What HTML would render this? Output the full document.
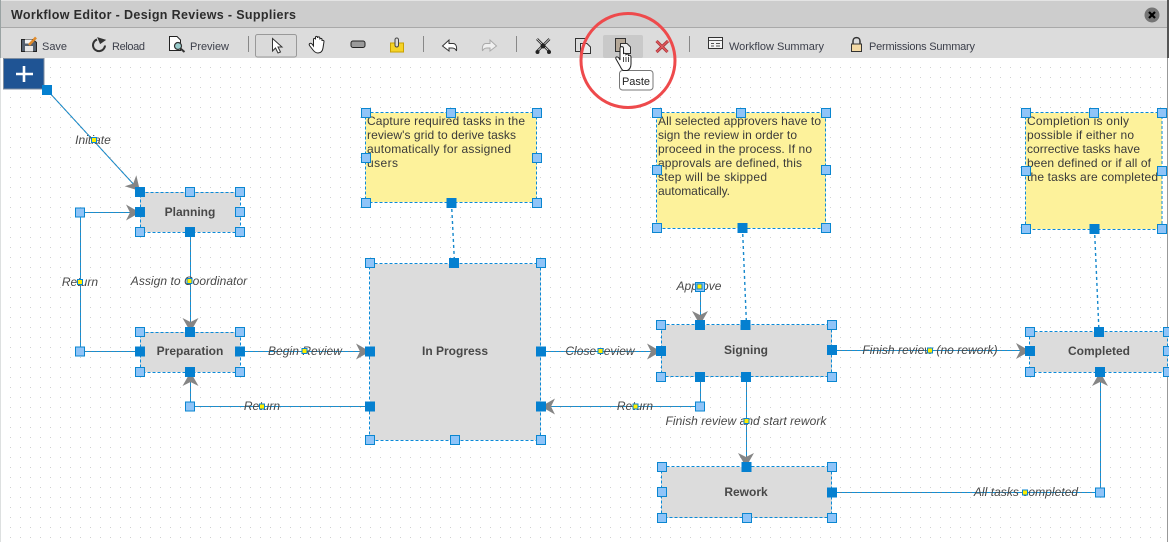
<!DOCTYPE html>
<html><head><meta charset="utf-8"><title>Workflow Editor</title>
<style>
html,body{margin:0;padding:0;width:1169px;height:542px;overflow:hidden;background:#fff}
svg{display:block;font-family:"Liberation Sans",Arial,sans-serif}
.n{font-size:12px;fill:#3a3a3a}
.b{font-size:12px;font-weight:bold;fill:#484848;text-anchor:middle}
.i{font-size:12px;font-style:italic;fill:#484848;text-anchor:middle;letter-spacing:.05px}
.t{font-size:11px;fill:#3c3f4a}
.e{fill:none;stroke:#4b7f9f;stroke-width:1}
.o{fill:none;stroke:#0c93dd;stroke-width:1;stroke-dasharray:3 2}
.k{fill:none;stroke:#0a8ad8;stroke-width:1;stroke-dasharray:3 2}
.c{fill:none;stroke:#1487cc;stroke-width:1.4;stroke-dasharray:3 3}
</style></head><body>
<svg width="1169" height="542" viewBox="0 0 1169 542" xmlns="http://www.w3.org/2000/svg">
<defs>
<pattern id="g" width="10" height="10" patternUnits="userSpaceOnUse" x="0" y="7"><rect x="0" y="0" width="1" height="1" fill="#cfcfcf"/></pattern>
<rect id="l" x="-4.5" y="-4.5" width="9" height="9" fill="#8fc4f8" stroke="#0a86d0" stroke-width="1" shape-rendering="crispEdges"/>
<rect id="d" x="-5" y="-5" width="10" height="10" fill="#0580d0" shape-rendering="crispEdges"/>
<path id="a" d="M0,0 L-14,-8 L-10,0 L-14,8 Z" fill="#858585"/>
<rect id="y" x="-2.5" y="-2.5" width="5" height="5" fill="#ffee00" stroke="#0a86d0" shape-rendering="crispEdges"/>
</defs>
<rect width="1169" height="542" fill="#fff"/>
<rect y="58" width="1169" height="484" fill="url(#g)"/>
<!-- title bar -->
<rect width="1169" height="28" fill="#cdcdcd"/>
<rect width="1169" height="1" fill="#e4e4e4"/>
<rect y="27" width="1169" height="1" fill="#a9a9a9"/>
<rect y="28" width="1169" height="30" fill="#dcdcdc"/>
<rect x="0" y="0" width="1" height="58" fill="#9aa3a3"/>
<rect x="0" y="58" width="1" height="484" fill="#dde0e0"/>
<rect x="1167" y="0" width="2" height="58" fill="#555"/>
<rect x="1167" y="58" width="1" height="484" fill="#999"/>
<text x="11" y="19" font-size="12.5" font-weight="bold" fill="#2c2c2c" textLength="285" lengthAdjust="spacing">Workflow Editor - Design Reviews - Suppliers</text>
<circle cx="1152" cy="15" r="7.5" fill="#757575"/>
<path d="M1149,12 L1155,18 M1155,12 L1149,18" stroke="#000" stroke-width="2.2"/>
<!-- toolbar icons -->
<g>
<path d="M21.500,39.500 H33 L36.500,42.500 V51.500 H21.500 Z" fill="#55606e" stroke="#222"/>
<rect x="25" y="46" width="8" height="5.500" fill="#e8e8e8"/><rect x="25" y="39.500" width="7" height="4" fill="#f3f3f3"/>
<path d="M29,45 L36,37.500" stroke="#e08a2a" stroke-width="2.600"/>
<path d="M97,39.500 A6,6 0 1 0 105,45.500" fill="none" stroke="#333" stroke-width="2"/>
<path d="M98,36.500 L106,41.500 L99,44 Z" fill="#333" transform="rotate(-15 100 40)"/>
<text class="t" x="42" y="50" textLength="25" lengthAdjust="spacing">Save</text>
<text class="t" x="112" y="50" textLength="33" lengthAdjust="spacing">Reload</text>
<path d="M169.500,36.500 H177 L180.500,40 V50.500 H169.500 Z" fill="#fff" stroke="#222"/>
<circle cx="178" cy="46" r="3.500" fill="#9cc" stroke="#333" stroke-width="1.200"/>
<path d="M180.500,48.500 L184.500,52" stroke="#333" stroke-width="2"/>
<text class="t" x="190" y="50" textLength="39" lengthAdjust="spacing">Preview</text>
<rect x="248" y="36" width="1" height="16" fill="#888"/>
<rect x="255.500" y="34.500" width="41" height="22.500" rx="2" fill="#dadada" stroke="#999"/>
<path d="M272.500,38.500 V51 L275.500,48 L278,53 L280.500,52 L278,47 L282,47 Z" fill="#fff" stroke="#333"/>
<path d="M313,50 L309.500,45.500 C308.500,43.500 310.500,42.500 312,44 L313.500,46 V39.500 C313.500,38 315.500,38 315.500,39.500 V37.500 C315.500,36 317.500,36 317.500,37.500 V38 C317.500,36.500 319.800,36.500 319.800,38 V39.500 C319.800,38 322,38 322,39.500 V41 C322,40 324,40 324,41.500 L323,48 C322.500,51 321,53 318,53 C316,53 314.500,52 313,50 Z" fill="#fff" stroke="#222"/>
<rect x="351" y="41" width="14" height="6.500" rx="2" fill="#9a9a9a" stroke="#222"/>
<rect x="390.500" y="43" width="13" height="9" fill="#f5d327" stroke="#c9a100"/>
<rect x="395" y="38" width="3.500" height="9" rx="1.700" fill="#ddd" stroke="#444"/>
<rect x="423" y="36" width="1" height="16" fill="#888"/>
<path d="M442.500,46 L449,40 V43.500 H453 C456,43.500 457,46.500 456.500,51 C455.500,48.500 454,48 452,48 H449 V51 Z" fill="#fff" stroke="#333"/>
<path d="M496.500,46 L490,40 V43.500 H486 C483,43.500 482,46.500 482.500,51 C483.500,48.500 485,48 487,48 H490 V51 Z" fill="#f0f0f0" stroke="#aaa"/>
<rect x="516" y="36" width="1" height="16" fill="#888"/>
<path d="M537,39 L549,51 M549.500,39 L537.500,51" stroke="#222" stroke-width="2.600"/>
<path d="M537,39 L549,51 M549.500,39 L537.500,51" stroke="#eee" stroke-width="0.800"/>
<circle cx="543" cy="46" r="2.500" fill="#222"/>
<circle cx="537.500" cy="52" r="2" fill="#222"/><circle cx="549" cy="52" r="2" fill="#222"/>
<rect x="575.500" y="38.500" width="10" height="13" fill="#dcdcdc" stroke="#333"/>
<path d="M580.500,43.500 H587 L590.500,47 V53.500 H580.500 Z" fill="#ececec" stroke="#333"/>
<rect x="603" y="35" width="40" height="23" rx="2" fill="#c9c9c9"/>
<rect x="615.500" y="38.500" width="10" height="13" fill="#b5a898" stroke="#333"/>
<path d="M620.500,43.500 H627 L630.500,47 V53.500 H620.500 Z" fill="#efefef" stroke="#333"/>
<path d="M656.500,41 L667.500,52 M668,41 L656.500,52" stroke="#a8343a" stroke-width="3"/>
<path d="M656.500,41 L667.500,52 M668,41 L656.500,52" stroke="#e0585c" stroke-width="1.400"/>
<rect x="689" y="36" width="1" height="16" fill="#888"/>
<rect x="708.500" y="37.500" width="14" height="11" fill="#f4f4f4" stroke="#333"/>
<path d="M709,40.500 H722 M711,43.500 H714 M711,46 H714 M716,43.500 H720 M716,46 H720" stroke="#555"/>
<text class="t" x="729" y="50" textLength="95" lengthAdjust="spacing">Workflow Summary</text>
<path d="M853,44 V41 C853,36.500 860,36.500 860,41 V44" fill="none" stroke="#333" stroke-width="1.500"/>
<rect x="851.500" y="44" width="10" height="7.500" fill="#f3d9a4" stroke="#333"/>
<text class="t" x="869" y="50" textLength="106" lengthAdjust="spacing">Permissions Summary</text>
</g>
<!-- plus -->
<rect x="3.500" y="58.500" width="40.500" height="30.500" fill="#1f5494" stroke="#7f8ea0"/>
<path d="M24,66 V82 M16,74 H33" stroke="#fff" stroke-width="2.600"/>
<!-- boxes -->
<rect x="140" y="192" width="100" height="40" fill="#dcdcdc"/>
<rect x="140" y="332" width="100" height="40" fill="#dcdcdc"/>
<rect x="370" y="264" width="171" height="176" fill="#dcdcdc"/>
<rect x="661" y="325" width="171" height="52" fill="#dcdcdc"/>
<rect x="661" y="467" width="171" height="51" fill="#dcdcdc"/>
<rect x="1030" y="332" width="138" height="40" fill="#dcdcdc"/>
<rect x="365.500" y="113" width="171" height="89" fill="#fdf29b"/>
<rect x="657" y="113" width="169" height="115" fill="#fdf29b"/>
<rect x="1025.500" y="113" width="136.500" height="116" fill="#fdf29b"/>
<g class="k">
<rect x="140.500" y="192.500" width="100" height="40"/>
<rect x="140.500" y="332.500" width="100" height="40"/>
<rect x="369.500" y="263.500" width="171" height="177"/>
<rect x="661.500" y="324.500" width="170" height="52"/>
<rect x="661.500" y="466.500" width="170" height="51"/>
<rect x="1029.500" y="331.500" width="138" height="41"/>
<rect x="365.500" y="112.500" width="171" height="90"/>
<rect x="656.500" y="112.500" width="169" height="116"/>
<rect x="1025.500" y="112.500" width="136.500" height="117"/>
</g>
<!-- connectors -->
<path class="c" d="M451.500,203 L454.500,263 M742.500,228 L746.500,325 M1094.500,229 L1099,332"/>
<g id="lines">
<path class="e" d="M47,90 L137,188 M80.500,212.500 H135 M80.500,212.500 V351.500 H140 M190.500,232 V328 M240,351.500 H365 M190.500,406.500 V378 M190.500,406.500 H370 M541,351.500 H656 M700.500,406.500 H546 M700.500,406.500 V377 M700.500,287 V320 M746.500,377 V462 M832,350.500 H1025 M832,492.500 H1100.500 V378"/>
<path class="o" d="M47,90 L137,188 M80.500,212.500 H135 M80.500,212.500 V351.500 H140 M190.500,232 V328 M240,351.500 H365 M190.500,406.500 V378 M190.500,406.500 H370 M541,351.500 H656 M700.500,406.500 H546 M700.500,406.500 V377 M700.500,287 V320 M746.500,377 V462 M832,350.500 H1025 M832,492.500 H1100.500 V378"/>
</g>
<!-- arrows -->
<use href="#a" transform="translate(140,191) rotate(47)"/>
<use href="#a" transform="translate(140,212.500)"/>
<use href="#a" transform="translate(190.500,332) rotate(90)"/>
<use href="#a" transform="translate(370,351.500)"/>
<use href="#a" transform="translate(190.500,372) rotate(-90)"/>
<use href="#a" transform="translate(661,351.500)"/>
<use href="#a" transform="translate(541,406.500) rotate(180)"/>
<use href="#a" transform="translate(700,325) rotate(90)"/>
<use href="#a" transform="translate(746,467) rotate(90)"/>
<use href="#a" transform="translate(1030,351)"/>
<use href="#a" transform="translate(1100,372) rotate(-90)"/>
<!-- text -->
<text class="b" x="190" y="216">Planning</text>
<text class="b" x="190" y="355">Preparation</text>
<text class="b" x="455" y="355">In Progress</text>
<text class="b" x="746" y="354">Signing</text>
<text class="b" x="746" y="496">Rework</text>
<text class="b" x="1099" y="355">Completed</text>
<text class="i" x="93" y="144">Initiate</text>
<text class="i" x="80" y="286">Return</text>
<text class="i" x="189" y="285">Assign to Coordinator</text>
<text class="i" x="305" y="355">Begin Review</text>
<text class="i" x="262" y="410">Return</text>
<text class="i" x="600" y="355">Close review</text>
<text class="i" x="635" y="410">Return</text>
<text class="i" x="699" y="290">Approve</text>
<text class="i" x="746" y="425">Finish review and start rework</text>
<text class="i" x="930" y="354">Finish review (no rework)</text>
<text class="i" x="1026" y="496">All tasks completed</text>
<g class="n">
<text x="367" y="125" textLength="158" lengthAdjust="spacing">Capture required tasks in the</text>
<text x="367" y="139" textLength="149" lengthAdjust="spacing">review's grid to derive tasks</text>
<text x="367" y="153" textLength="144" lengthAdjust="spacing">automatically for assigned</text>
<text x="367" y="167" textLength="31" lengthAdjust="spacing">users</text>
<text x="658" y="125" textLength="163" lengthAdjust="spacing">All selected approvers have to</text>
<text x="658" y="139" textLength="139" lengthAdjust="spacing">sign the review in order to</text>
<text x="658" y="153" textLength="154" lengthAdjust="spacing">proceed in the process. If no</text>
<text x="658" y="167" textLength="144" lengthAdjust="spacing">approvals are defined, this</text>
<text x="658" y="181" textLength="109" lengthAdjust="spacing">step will be skipped</text>
<text x="658" y="195" textLength="72" lengthAdjust="spacing">automatically.</text>
<text x="1027" y="125" textLength="102" lengthAdjust="spacing">Completion is only</text>
<text x="1027" y="139" textLength="107" lengthAdjust="spacing">possible if either no</text>
<text x="1027" y="153" textLength="113" lengthAdjust="spacing">corrective tasks have</text>
<text x="1027" y="167" textLength="124" lengthAdjust="spacing">been defined or if all of</text>
<text x="1027" y="181" textLength="131" lengthAdjust="spacing">the tasks are completed</text>
</g>
<!-- light handles -->
<g>
<use href="#l" x="140" y="232"/><use href="#l" x="190" y="192"/><use href="#l" x="240" y="192"/><use href="#l" x="240" y="212"/><use href="#l" x="240" y="232"/>
<use href="#l" x="80" y="212.500"/><use href="#l" x="80" y="351.500"/>
<use href="#l" x="140" y="332"/><use href="#l" x="240" y="332"/><use href="#l" x="140" y="372"/><use href="#l" x="240" y="372"/>
<use href="#l" x="190" y="406.500"/>
<use href="#l" x="370" y="263"/><use href="#l" x="541" y="263"/><use href="#l" x="370" y="440"/><use href="#l" x="455" y="440"/><use href="#l" x="541" y="440"/>
<use href="#l" x="366" y="113"/><use href="#l" x="451" y="113"/><use href="#l" x="537" y="113"/><use href="#l" x="366" y="158"/><use href="#l" x="537" y="158"/><use href="#l" x="366" y="203"/><use href="#l" x="537" y="203"/>
<use href="#l" x="657" y="113"/><use href="#l" x="741" y="113"/><use href="#l" x="826" y="113"/><use href="#l" x="657" y="170"/><use href="#l" x="826" y="170"/><use href="#l" x="657" y="228"/><use href="#l" x="826" y="228"/>
<use href="#l" x="1026" y="113"/><use href="#l" x="1094" y="113"/><use href="#l" x="1162" y="113"/><use href="#l" x="1026" y="171"/><use href="#l" x="1162" y="171"/><use href="#l" x="1026" y="229"/><use href="#l" x="1162" y="229"/>
<use href="#l" x="661" y="325"/><use href="#l" x="832" y="325"/><use href="#l" x="661" y="377"/><use href="#l" x="832" y="377"/>
<use href="#l" x="700" y="287"/><use href="#l" x="700" y="406.500"/>
<use href="#l" x="662" y="467"/><use href="#l" x="832" y="467"/><use href="#l" x="662" y="492"/><use href="#l" x="662" y="518"/><use href="#l" x="747" y="518"/><use href="#l" x="832" y="518"/>
<use href="#l" x="1030" y="332"/><use href="#l" x="1030" y="372"/><use href="#l" x="1168" y="332"/><use href="#l" x="1168" y="351"/><use href="#l" x="1168" y="372"/>
<use href="#l" x="1100" y="492.500"/>
</g>
<!-- dark handles -->
<g>
<use href="#d" x="47" y="90"/><use href="#d" x="140" y="192"/><use href="#d" x="140" y="212"/><use href="#d" x="190" y="232"/>
<use href="#d" x="190" y="332"/><use href="#d" x="140" y="351.500"/><use href="#d" x="240" y="351.500"/><use href="#d" x="190" y="372"/>
<use href="#d" x="454" y="263"/><use href="#d" x="370" y="351.500"/><use href="#d" x="541" y="351.500"/><use href="#d" x="370" y="406.500"/><use href="#d" x="541" y="406.500"/>
<use href="#d" x="451.500" y="203"/><use href="#d" x="742.500" y="228"/><use href="#d" x="1094.500" y="229"/>
<use href="#d" x="700" y="325"/><use href="#d" x="745.500" y="325"/><use href="#d" x="661" y="351"/><use href="#d" x="832" y="350"/><use href="#d" x="700" y="377"/><use href="#d" x="746" y="377"/>
<use href="#d" x="746.500" y="467"/><use href="#d" x="832" y="492.500"/>
<use href="#d" x="1099" y="332"/><use href="#d" x="1030" y="351"/><use href="#d" x="1100" y="372"/>
</g>
<!-- midpoint markers -->
<g>
<use href="#y" x="94" y="140"/><use href="#y" x="80" y="282"/><use href="#y" x="189.500" y="281"/><use href="#y" x="304.500" y="351"/>
<use href="#y" x="262" y="406.500"/><use href="#y" x="600.500" y="351"/><use href="#y" x="635.500" y="406.500"/><use href="#y" x="699.500" y="286.500"/>
<use href="#y" x="746.500" y="421"/><use href="#y" x="930" y="350.500"/><use href="#y" x="1025" y="492.500"/>
</g>
<!-- red circle -->
<circle cx="628" cy="60.500" r="47" fill="none" stroke="#ee4a4c" stroke-width="3"/>
<!-- tooltip -->
<rect x="619.500" y="70.500" width="33.500" height="19.500" rx="3" fill="#fff" stroke="#777"/>
<text x="622" y="85" font-size="11" fill="#222" textLength="28" lengthAdjust="spacing">Paste</text>
<!-- hand cursor -->
<path d="M620,66 L616,59 C615,57 617,56 619,58 L620,60 V48.500 C620,46 623.500,46 623.500,48.500 V54 C624,53 626,53 626,54.500 C627,53.500 628.500,54 628.500,55.500 C629.500,54.800 631,55.500 631,57 V64 C631,67 629.500,70 627,70.500 H623.500 C622,70.500 621,68 620,66 Z" fill="#fff" stroke="#222"/>
<path d="M623.500,57 V62 M626,57 V62 M628.500,57 V62" stroke="#333" stroke-width="0.900"/>
</svg>
</body></html>
